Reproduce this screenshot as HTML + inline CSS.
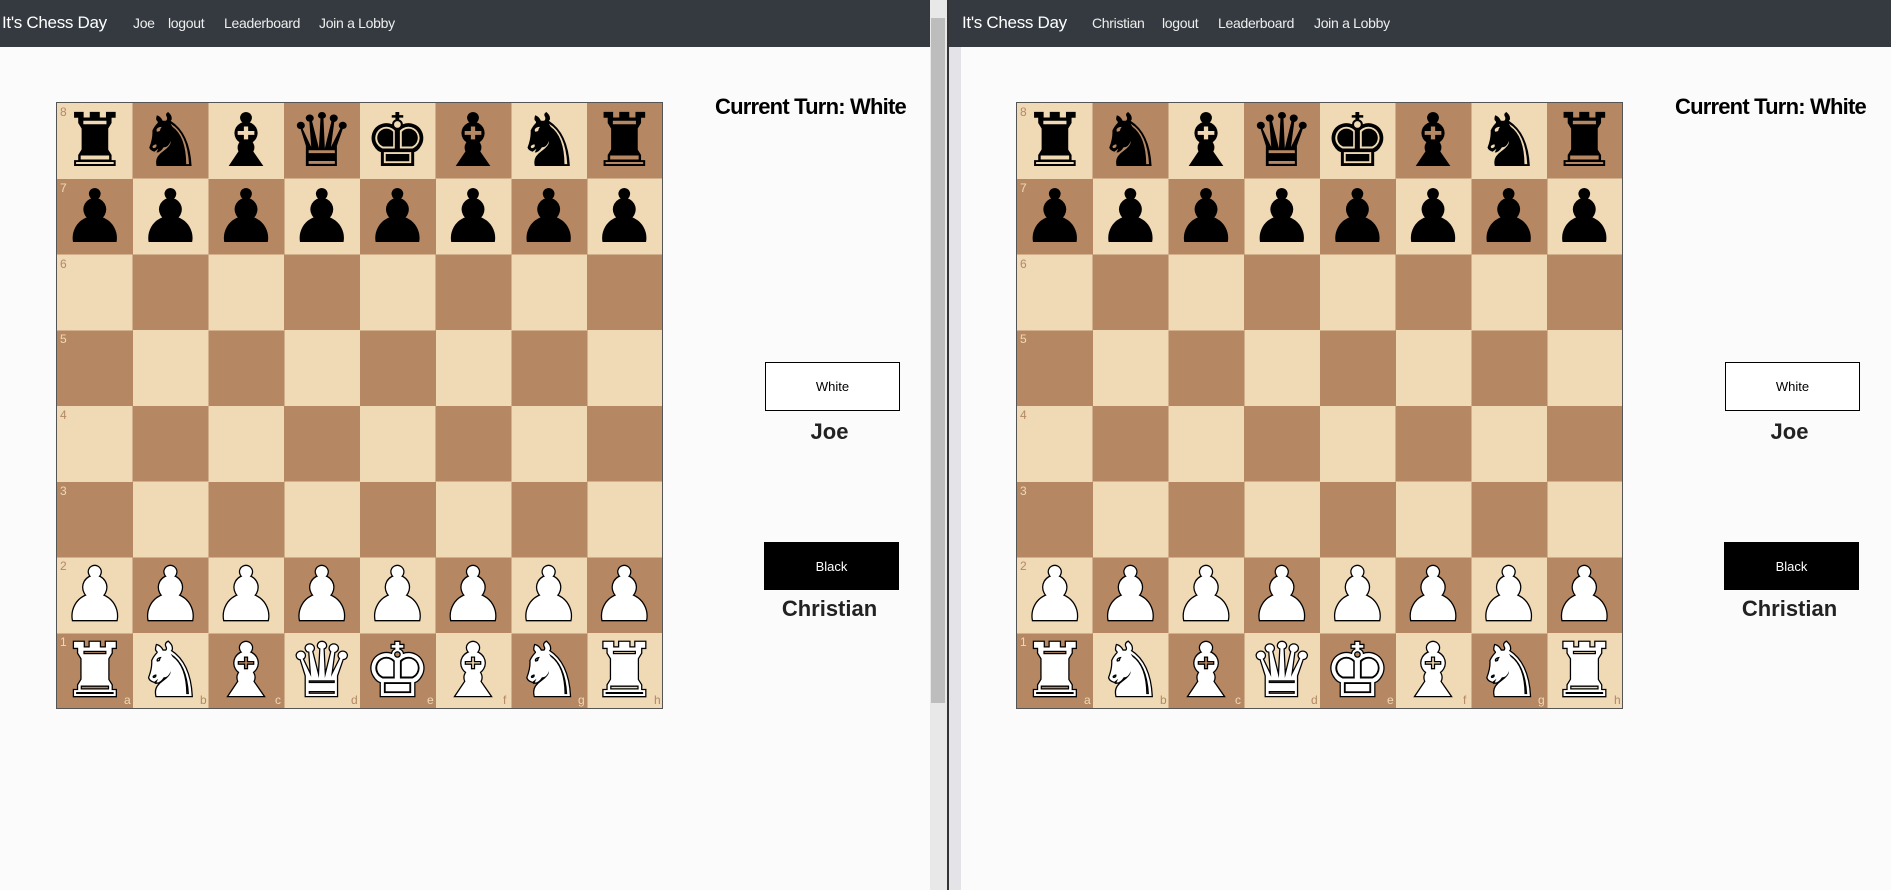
<!DOCTYPE html>
<html><head><meta charset="utf-8"><style>
*{margin:0;padding:0;box-sizing:border-box}
body{width:1891px;height:890px;overflow:hidden;background:#fbfbfb;font-family:"Liberation Sans",sans-serif;position:relative}
.nav{position:absolute;top:0;height:47px;background:#343a40;color:#fff;font-family:"Liberation Sans",sans-serif}
.nav .brand{position:absolute;top:13px;font-size:17px;letter-spacing:-0.3px}
.nav .l{position:absolute;top:15px;font-size:14px;color:#eee;letter-spacing:-0.3px}
.board{position:absolute;top:102px;width:607px;height:607px;border:1px solid #555;
background:repeating-conic-gradient(#b58863 0 25%,#f0d9b5 0 50%) 0 0/151.5px 151.5px}
.g{position:absolute;left:0;width:605px;display:grid;grid-template-columns:repeat(8,75.65px);grid-auto-rows:75.65px;overflow:hidden}
.g div{font-family:"DejaVu Sans",sans-serif;font-size:74px;line-height:76px;text-align:center;color:#000;overflow:visible}
.g.w div{color:#fff;-webkit-text-stroke:2.6px #000;paint-order:stroke fill}
.n{position:absolute;font-size:12px;left:3px}
.lt{position:absolute;font-size:12px;bottom:1px}
.turn{position:absolute;top:94px;font-weight:bold;font-size:22px;letter-spacing:-0.8px}
.bw{position:absolute;width:135px;height:49px;border:1.5px solid #000;background:#fff;font-size:13px;text-align:center;line-height:48px}
.bb{position:absolute;width:135px;height:48px;background:#000;color:#fff;font-size:13px;text-align:center;line-height:50px}
.pn{position:absolute;width:135px;text-align:center;font-weight:bold;font-size:22px;color:#222}
</style></head><body>
<div class="nav" style="left:0;width:930px">
<span class="brand" style="left:2px">It's Chess Day</span>
<span class="l" style="left:133px">Joe</span><span class="l" style="left:168px">logout</span><span class="l" style="left:224px">Leaderboard</span><span class="l" style="left:319px">Join a Lobby</span></div>
<div style="position:absolute;left:930px;top:0;width:17px;height:890px;background:#e8e8e8"></div>
<div style="position:absolute;left:931px;top:18px;width:14px;height:685px;background:#bdbdbd"></div>
<div style="position:absolute;left:947px;top:0;width:2px;height:890px;background:#333"></div>
<div style="position:absolute;left:949px;top:47px;width:12px;height:843px;background:#e4e4e8"></div>
<div class="nav" style="left:949px;width:942px">
<span class="brand" style="left:13px">It's Chess Day</span>
<span class="l" style="left:143px">Christian</span><span class="l" style="left:213px">logout</span><span class="l" style="left:269px">Leaderboard</span><span class="l" style="left:365px">Join a Lobby</span></div>

<!-- LEFT -->
<div class="board" style="left:56px">
<div class="g" style="top:0"><div>♜</div><div>♞</div><div>♝</div><div>♛</div><div>♚</div><div>♝</div><div>♞</div><div>♜</div><div>♟</div><div>♟</div><div>♟</div><div>♟</div><div>♟</div><div>♟</div><div>♟</div><div>♟</div></div>
<div class="g w" style="top:454px"><div>♟</div><div>♟</div><div>♟</div><div>♟</div><div>♟</div><div>♟</div><div>♟</div><div>♟</div><div>♜</div><div>♞</div><div>♝</div><div>♛</div><div>♚</div><div>♝</div><div>♞</div><div>♜</div></div>
<span class="n" style="top:2px;color:#b58863">8</span><span class="n" style="top:78px;color:#f0d9b5">7</span><span class="n" style="top:154px;color:#b58863">6</span><span class="n" style="top:229px;color:#f0d9b5">5</span><span class="n" style="top:305px;color:#b58863">4</span><span class="n" style="top:381px;color:#f0d9b5">3</span><span class="n" style="top:456px;color:#b58863">2</span><span class="n" style="top:532px;color:#f0d9b5">1</span>
<span class="lt" style="left:67px;color:#f0d9b5">a</span><span class="lt" style="left:143px;color:#b58863">b</span><span class="lt" style="left:218px;color:#f0d9b5">c</span><span class="lt" style="left:294px;color:#b58863">d</span><span class="lt" style="left:370px;color:#f0d9b5">e</span><span class="lt" style="left:446px;color:#b58863">f</span><span class="lt" style="left:521px;color:#f0d9b5">g</span><span class="lt" style="left:597px;color:#b58863">h</span>
</div>
<div class="turn" style="left:715px">Current Turn: White</div>
<div class="bw" style="left:765px;top:362px">White</div>
<div class="pn" style="left:762px;top:419px">Joe</div>
<div class="bb" style="left:764px;top:542px">Black</div>
<div class="pn" style="left:762px;top:596px">Christian</div>

<!-- RIGHT -->
<div class="board" style="left:1016px">
<div class="g" style="top:0"><div>♜</div><div>♞</div><div>♝</div><div>♛</div><div>♚</div><div>♝</div><div>♞</div><div>♜</div><div>♟</div><div>♟</div><div>♟</div><div>♟</div><div>♟</div><div>♟</div><div>♟</div><div>♟</div></div>
<div class="g w" style="top:454px"><div>♟</div><div>♟</div><div>♟</div><div>♟</div><div>♟</div><div>♟</div><div>♟</div><div>♟</div><div>♜</div><div>♞</div><div>♝</div><div>♛</div><div>♚</div><div>♝</div><div>♞</div><div>♜</div></div>
<span class="n" style="top:2px;color:#b58863">8</span><span class="n" style="top:78px;color:#f0d9b5">7</span><span class="n" style="top:154px;color:#b58863">6</span><span class="n" style="top:229px;color:#f0d9b5">5</span><span class="n" style="top:305px;color:#b58863">4</span><span class="n" style="top:381px;color:#f0d9b5">3</span><span class="n" style="top:456px;color:#b58863">2</span><span class="n" style="top:532px;color:#f0d9b5">1</span>
<span class="lt" style="left:67px;color:#f0d9b5">a</span><span class="lt" style="left:143px;color:#b58863">b</span><span class="lt" style="left:218px;color:#f0d9b5">c</span><span class="lt" style="left:294px;color:#b58863">d</span><span class="lt" style="left:370px;color:#f0d9b5">e</span><span class="lt" style="left:446px;color:#b58863">f</span><span class="lt" style="left:521px;color:#f0d9b5">g</span><span class="lt" style="left:597px;color:#b58863">h</span>
</div>
<div class="turn" style="left:1675px">Current Turn: White</div>
<div class="bw" style="left:1725px;top:362px">White</div>
<div class="pn" style="left:1722px;top:419px">Joe</div>
<div class="bb" style="left:1724px;top:542px">Black</div>
<div class="pn" style="left:1722px;top:596px">Christian</div>
</body></html>
